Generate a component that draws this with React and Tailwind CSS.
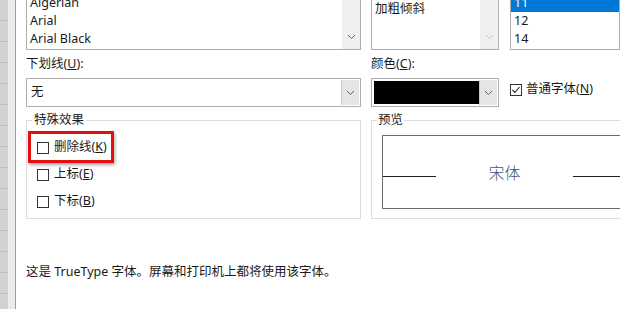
import React from "react";

const UI = { fontFamily: '"Noto Sans", "Noto Sans CJK SC", sans-serif' };

function Chevron({ muted }) {
  return (
    <svg width="9" height="6" viewBox="0 0 9 6" className="block">
      <path d="M1 1 L4.5 4.5 L8 1" fill="none" stroke={muted ? "#c2c2c2" : "#606060"} strokeWidth="1" />
    </svg>
  );
}

function ListBox({ items, width, muted, selected }) {
  return (
    <div className="shrink-0 flex border border-t-0 border-[#adadad] bg-white h-[50px] overflow-hidden" style={{ width }}>
      <div className="flex-1 flex flex-col justify-end pb-[1px] min-w-0">
        {items.map((t, i) => (
          <div
            key={i}
            className={`h-[18px] leading-[18px] px-[3px] text-[12.5px] whitespace-nowrap ${t === selected ? "bg-[#0078d7] text-white" : "text-[#1a1a1a]"}`}
          >
            {t}
          </div>
        ))}
      </div>
      {muted !== undefined && (
        <div className="w-[18px] bg-[#f0f0f0] flex flex-col justify-end items-center pb-[9px]">
          <Chevron muted={muted} />
        </div>
      )}
    </div>
  );
}

function Combo({ width, children }) {
  return (
    <div className="shrink-0 flex border border-[#adadad] bg-white h-[29px]" style={{ width }}>
      <div className="flex-1 flex items-center min-w-0">{children}</div>
      <div className="w-[18px] my-[1px] mr-[1px] bg-[#e5e5e5] border-l border-[#c9c9c9] grid place-items-center">
        <Chevron />
      </div>
    </div>
  );
}

function Box({ checked }) {
  return (
    <span className="w-[12px] h-[12px] border border-[#333] bg-white grid place-items-center shrink-0">
      {checked && (
        <svg width="10" height="10" viewBox="0 0 10 10">
          <path d="M1.5 5 L4 7.5 L8.5 2" fill="none" stroke="#222" strokeWidth="1.1" />
        </svg>
      )}
    </span>
  );
}

function Check({ label, k, highlight }) {
  return (
    <div className="relative flex items-center gap-[5px] h-[27px] pl-[10px] text-[12.5px] text-[#1a1a1a]">
      <Box />
      <span>
        {label}(<span className="underline">{k}</span>)
      </span>
      {highlight && (
        <div className="absolute left-[1px] top-[-3px] w-[86px] h-[32px] border-[3px] border-[#e60f0f] shadow-[1px_2px_3px_rgba(0,0,0,0.35)]" />
      )}
    </div>
  );
}

export default function App() {
  return (
    <div className="w-[620px] h-[309px] flex overflow-hidden bg-white" style={UI}>
      {/* excel sheet edge behind the dialog */}
      <div className="w-[8px] shrink-0 bg-[#d2d2d2] flex flex-col">
        {Array.from({ length: 15 }).map((_, i) => (
          <div key={i} className="h-[21px] border-b border-[#bdbdbd] shrink-0" />
        ))}
      </div>
      <div className="w-[7px] shrink-0 bg-[#ececec]" />
      <div className="w-[1px] shrink-0 bg-[#7aa3d6]" />

      <div className="flex-1 min-w-0 pl-[10px] flex flex-col overflow-hidden">
        <div className="flex">
          <ListBox width={335} items={["Algerian", "Arial", "Arial Black"]} muted={false} />
          <div className="w-[10px] shrink-0" />
          <ListBox width={128} items={["加粗倾斜", "", ""]} muted={true} />
          <div className="w-[11px] shrink-0" />
          <ListBox width={110} items={["11", "12", "14"]} selected="11" />
        </div>

        <div className="flex mt-[5px]">
          <div className="w-[335px] shrink-0">
            <div className="h-[18px] leading-[18px] text-[12.5px] text-[#1a1a1a]">
              下划线(<span className="underline">U</span>):
            </div>
            <div className="mt-[5px]">
              <Combo width={335}>
                <span className="pl-[4px] text-[12.5px] text-[#1a1a1a]">无</span>
              </Combo>
            </div>
          </div>
          <div className="w-[10px] shrink-0" />
          <div className="w-[128px] shrink-0">
            <div className="h-[18px] leading-[18px] text-[12.5px] text-[#1a1a1a]">
              颜色(<span className="underline">C</span>):
            </div>
            <div className="mt-[5px]">
              <Combo width={128}>
                <div className="ml-[2px] h-[23px] flex-1 bg-black" />
              </Combo>
            </div>
          </div>
          <div className="w-[11px] shrink-0" />
          <div className="flex items-end pb-[8px] shrink-0">
            <div className="flex items-center gap-[4px] text-[12.5px] text-[#1a1a1a] whitespace-nowrap">
              <Box checked />
              <span>
                普通字体(<span className="underline">N</span>)
              </span>
            </div>
          </div>
        </div>

        <div className="flex mt-[6px]">
          <fieldset className="w-[335px] shrink-0 h-[106px] border border-[#dcdcdc] p-0 m-0 min-w-0">
            <legend className="ml-[5px] px-[2px] text-[12.5px] leading-[14px] text-[#1a1a1a]">特殊效果</legend>
            <div className="pt-[7px]">
              <Check label="删除线" k="K" highlight />
              <Check label="上标" k="E" />
              <Check label="下标" k="B" />
            </div>
          </fieldset>
          <div className="w-[10px] shrink-0" />
          <fieldset className="w-[260px] shrink-0 h-[106px] border border-[#dcdcdc] border-r-0 p-0 m-0 min-w-0">
            <legend className="ml-[5px] px-[1px] text-[12.5px] leading-[14px] text-[#1a1a1a]">预览</legend>
            <div className="ml-[10px] mt-[8px] h-[74px] border border-r-0 border-[#6b6b6b] flex items-center">
              <div className="w-[53px] h-[1px] bg-[#222] mt-[9px] shrink-0" />
              <div
                className="w-[137px] text-center text-[16px] text-[#42557a] shrink-0"
                style={{ fontFamily: '"Noto Sans CJK SC", sans-serif', fontWeight: 300 }}
              >
                宋体
              </div>
              <div className="flex-1 h-[1px] bg-[#222] mt-[9px]" />
            </div>
          </fieldset>
        </div>

        <div className="mt-[44px] text-[12.5px] text-[#1a1a1a] whitespace-nowrap">
          这是 TrueType 字体。屏幕和打印机上都将使用该字体。
        </div>
      </div>
    </div>
  );
}
